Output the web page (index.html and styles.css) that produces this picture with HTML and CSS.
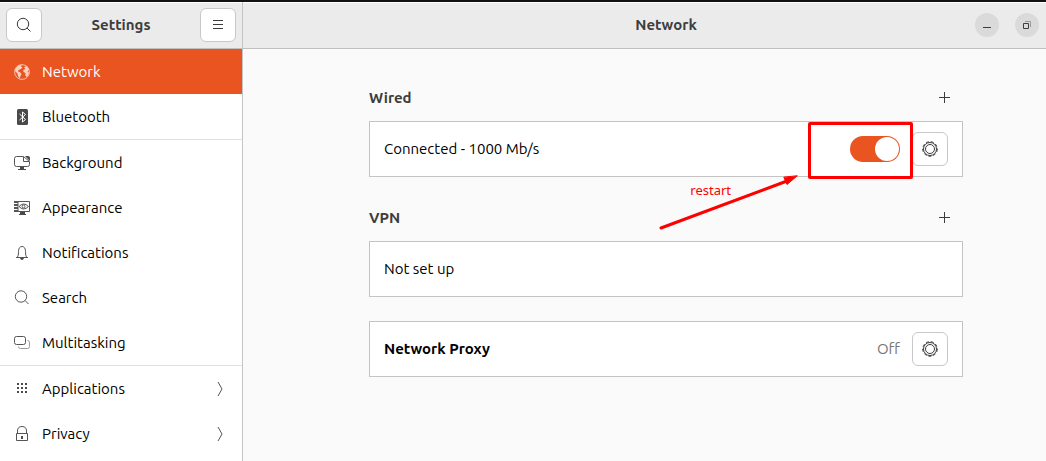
FILE: index.html
```html
<!DOCTYPE html>
<html lang="en">
<head>
<meta charset="UTF-8">
<meta name="viewport" content="width=device-width, initial-scale=1.0">
<title>Settings - Network</title>
<link rel="stylesheet" href="styles.css">
</head>
<body>

<div class="window">
    <aside class="sidebar">
        <header class="sidebar-header">
            <button type="button" class="icon-button" aria-label="Search settings">
                <svg width="16" height="16" viewBox="0 0 16 16"><circle cx="7" cy="7" r="5.7"/><path d="M11 11l3.5 3.5"/></svg>
            </button>
            <h1>Settings</h1>
            <button type="button" class="icon-button" aria-label="Menu">
                <svg width="16" height="16" viewBox="0 0 16 16"><path d="M3 3.5h10M3 7.5h10M3 11.5h10"/></svg>
            </button>
        </header>

        <nav class="menu">
            <a href="#network" class="active">
                <svg width="16" height="16" viewBox="0 0 16 16"><circle cx="8" cy="8" r="7.4"/><path class="fill" d="M1.5 4.5L4 1.8l4-1.2L7 2.5l1.500 1-2 1.800-2 .7-.5 1.500 1.800.5 1.700 2-1 2-.8 2.600L4 12l-.5-2.600L1 7zM10 3l3-1 2 4-1.500 1.200L15 9l-2 4-1.700-1.500.2-2.500L9.500 8l-.2-2 2-1z"/></svg>
                <span>Network</span>
            </a>
            <a href="#bluetooth">
                <svg width="16" height="16" viewBox="0 0 16 16"><rect class="fill" x="3" y="0" width="11" height="16" rx="1.500"/><path class="light" d="M5.500 5l6 5.500L8.500 13V3l3 2.500-6 5.500"/></svg>
                <span>Bluetooth</span>
            </a>
            <a href="#background" class="divided">
                <svg width="16" height="16" viewBox="0 0 16 16"><path d="M9 1.500H2.500a2 2 0 0 0-2 2v6a2 2 0 0 0 2 2h11a2 2 0 0 0 2-2V7M9.500 1.500v5h6z"/><path class="fill" d="M11 1h3q2 0 2 2v3zM6 12h4v2H6zM4 14h8v1H4z"/></svg>
                <span>Background</span>
            </a>
            <a href="#appearance">
                <svg width="16" height="16" viewBox="0 0 16 16"><path d="M4 1.500h11.500v10H4zM5 6.500q4.500-5 9.500 0-5 5-9.500 0z"/><path d="M2 1v11" stroke-width="4" stroke-dasharray="2 1"/><circle cx="9.500" cy="6.500" r="1.500"/><path class="fill" d="M6 12h5v2H6zM5 14h7v1H5z"/></svg>
                <span>Appearance</span>
            </a>
            <a href="#notifications">
                <svg width="16" height="16" viewBox="0 0 16 16"><path d="M2 12.500h12M3.500 12q1-1 1-5.500C4.500 3 6 1.500 8 1.500S11.500 3 11.500 6.500q0 4.500 1 5.500"/><path class="fill" d="M6 13h4q-.5 2-2 2t-2-2z"/></svg>
                <span>Notifications</span>
            </a>
            <a href="#search">
                <svg width="16" height="16" viewBox="0 0 16 16"><circle cx="7" cy="6.500" r="5.700"/><path d="M11 10.500l3.500 3.500"/></svg>
                <span>Search</span>
            </a>
            <a href="#multitasking">
                <svg width="16" height="16" viewBox="0 0 16 16"><rect x=".5" y="1.500" width="11" height="8" rx="2"/><path class="faint" d="M13.500 5.500q2 0 2 2v4q0 2-2 2h-7q-2 0-2-2"/></svg>
                <span>Multitasking</span>
            </a>
            <a href="#applications" class="divided">
                <svg width="16" height="16" viewBox="0 0 16 16"><path class="fill" d="M3 2h2v2H3zM7 2h2v2H7zM11 2h2v2h-2zM3 6h2v2H3zM7 6h2v2H7zM11 6h2v2h-2zM3 10h2v2H3zM7 10h2v2H7zM11 10h2v2h-2z"/></svg>
                <span>Applications</span>
                <svg class="chevron" width="8" height="16" viewBox="0 0 8 16"><path d="M2 1l4 7-4 7"/></svg>
            </a>
            <a href="#privacy">
                <svg width="16" height="16" viewBox="0 0 16 16"><path d="M2.500 7.500h11v7h-11zM3.500 7V5Q3.500.5 8 .5T12.500 5v2"/><path class="fill" d="M7 10h2v3H7z"/></svg>
                <span>Privacy</span>
                <svg class="chevron" width="8" height="16" viewBox="0 0 8 16"><path d="M2 1l4 7-4 7"/></svg>
            </a>
        </nav>
    </aside>

    <div class="panel">
        <header class="panel-header">
            <h2>Network</h2>
            <div class="window-controls">
                <button type="button" aria-label="Minimize">
                    <svg width="16" height="16" viewBox="0 0 16 16"><path d="M4 10.500h8"/></svg>
                </button>
                <button type="button" aria-label="Restore">
                    <svg width="16" height="16" viewBox="0 0 16 16"><path d="M4.500 6.500h5v5h-5z"/><path class="faint" d="M6 4.500h5.500V10"/></svg>
                </button>
            </div>
        </header>

        <main class="content">
            <section>
                <div class="section-title">
                    <h3>Wired</h3>
                    <button type="button" class="add" aria-label="Add wired connection">
                        <svg width="12" height="12" viewBox="0 0 12 12"><path d="M5.500 0v11M0 5.500h11"/></svg>
                    </button>
                </div>
                <div class="card">
                    <label for="wired">Connected - 1000 Mb/s</label>
                    <input type="checkbox" class="switch" id="wired" checked>
                    <button type="button" class="icon-button" aria-label="Wired options">
                        <svg width="18" height="18" viewBox="0 0 18 18"><circle cx="9" cy="9" r="4.500"/><circle cx="9" cy="9" r="6.500"/><circle class="teeth" cx="9" cy="9" r="7.300"/></svg>
                    </button>
                    <!-- restart hint drawn over the card -->
                    <div class="highlight"></div>
                    <span class="note">restart</span>
                    <svg class="arrow" width="144" height="58" viewBox="0 0 144 58"><path d="M5 54L131 7"/><path class="head" d="M141 2l-10 8.500-3-7z"/></svg>
                </div>
            </section>

            <section>
                <div class="section-title">
                    <h3>VPN</h3>
                    <button type="button" class="add" aria-label="Add VPN">
                        <svg width="12" height="12" viewBox="0 0 12 12"><path d="M5.500 0v11M0 5.500h11"/></svg>
                    </button>
                </div>
                <div class="card">
                    <p>Not set up</p>
                </div>
            </section>

            <section class="proxy">
                <div class="card">
                    <h3>Network Proxy</h3>
                    <span class="status">Off</span>
                    <button type="button" class="icon-button" aria-label="Proxy options">
                        <svg width="18" height="18" viewBox="0 0 18 18"><circle cx="9" cy="9" r="4.500"/><circle cx="9" cy="9" r="6.500"/><circle class="teeth" cx="9" cy="9" r="7.300"/></svg>
                    </button>
                </div>
            </section>
        </main>
    </div>
</div>

</body>
</html>
```
FILE: styles.css
```css
* {
    box-sizing: border-box;
}
body {
    margin: 0;
    background-color: #fafafa;
    color: #000;
    font-family: Ubuntu, "Noto Sans", sans-serif;
    font-size: 15px;
    line-height: 20px;
}
h1, h2, h3, p {
    margin: 0;
    font-size: 15px;
}
svg {
    display: block;
    flex: none;
    fill: none;
    stroke: #3d3d3d;
}
svg .fill {
    fill: #4a4a4a;
    stroke: none;
}
svg .light {
    stroke: #fff;
}
svg .faint {
    stroke: #999;
}
button {
    display: flex;
    align-items: center;
    justify-content: center;
    flex: none;
    padding: 0;
    border: none;
    background: none;
}
.window {
    display: flex;
    min-height: 100vh;
    border-top: 2px solid #111;
}
.sidebar {
    flex: none;
    width: 243px;
    background-color: #fff;
    border-right: 1px solid #c4c4c4;
}
.sidebar-header,
.panel-header {
    height: 47px;
    align-items: center;
    padding-bottom: 1px;
    background-color: #ebebeb;
    border-top: 1px solid #fff;
    border-bottom: 1px solid #bfbfbf;
    color: #3d3d3d;
}
.sidebar-header {
    display: flex;
    justify-content: space-between;
    padding-left: 6px;
    padding-right: 6px;
}
.icon-button {
    width: 36px;
    height: 34px;
    background-color: #fff;
    border: 1px solid #c8c8c8;
    border-radius: 6px;
}
.menu a {
    display: flex;
    align-items: center;
    gap: 12px;
    height: 45px;
    padding: 0 18px 0 14px;
    color: #000;
    text-decoration: none;
}
.menu svg {
    stroke: #555;
}
.menu a.active {
    background-color: #e95420;
    color: #fff;
}
.menu a.active svg {
    stroke: #f8bfa8;
}
.menu a.active .fill {
    fill: #fbd0c0;
}
.menu a.divided {
    height: 46px;
    border-top: 1px solid #e0e0e0;
}
.menu .chevron {
    margin-left: auto;
}
.panel {
    flex: 1;
    min-width: 0;
}
.panel-header {
    display: grid;
    grid-template-columns: 1fr auto 1fr;
    padding-left: 50px;
    padding-right: 7px;
}
.panel-header h2 {
    grid-column: 2;
}
.window-controls {
    display: flex;
    justify-content: flex-end;
    gap: 16px;
}
.window-controls button {
    width: 24px;
    height: 24px;
    border-radius: 50%;
    background-color: #dadada;
}
.content {
    max-width: 637px;
    margin: 0 auto;
    padding: 26px 0 26px 43px;
}
.section-title {
    display: flex;
    align-items: center;
    justify-content: space-between;
    height: 46px;
    padding-right: 12px;
    color: #3d3d3d;
}
section + section {
    margin-top: 18px;
}
section.proxy {
    margin-top: 24px;
}
.card {
    position: relative;
    display: flex;
    align-items: center;
    gap: 12px;
    height: 56px;
    padding: 0 14px;
    background-color: #fff;
    border: 1px solid #c4c4c4;
}
.card > :first-child {
    flex: 1;
}
.status {
    color: #777;
}
.switch {
    appearance: none;
    width: 50px;
    height: 26px;
    margin: 0;
    padding: 1px;
    border-radius: 13px;
    background-color: #c4c4c4;
}
.switch::before {
    content: "";
    display: block;
    width: 24px;
    height: 24px;
    border-radius: 50%;
    background-color: #fff;
}
.switch:checked {
    background-color: #e95420;
}
.switch:checked::before {
    margin-left: auto;
}
.teeth {
    stroke-dasharray: 3 2;
}
.highlight {
    position: absolute;
    top: 0;
    right: 49px;
    width: 105px;
    height: 57px;
    border: 3px solid #f00;
    border-radius: 2px;
}
.note {
    position: absolute;
    top: 58px;
    right: 231px;
    color: #f00;
    font-family: "Noto Sans", sans-serif;
    font-size: 13px;
}
.arrow {
    position: absolute;
    top: 52px;
    right: 162px;
    stroke: #f00;
    stroke-width: 3;
    stroke-linecap: round;
}
.arrow .head {
    fill: #f00;
    stroke-width: 1;
}
```
